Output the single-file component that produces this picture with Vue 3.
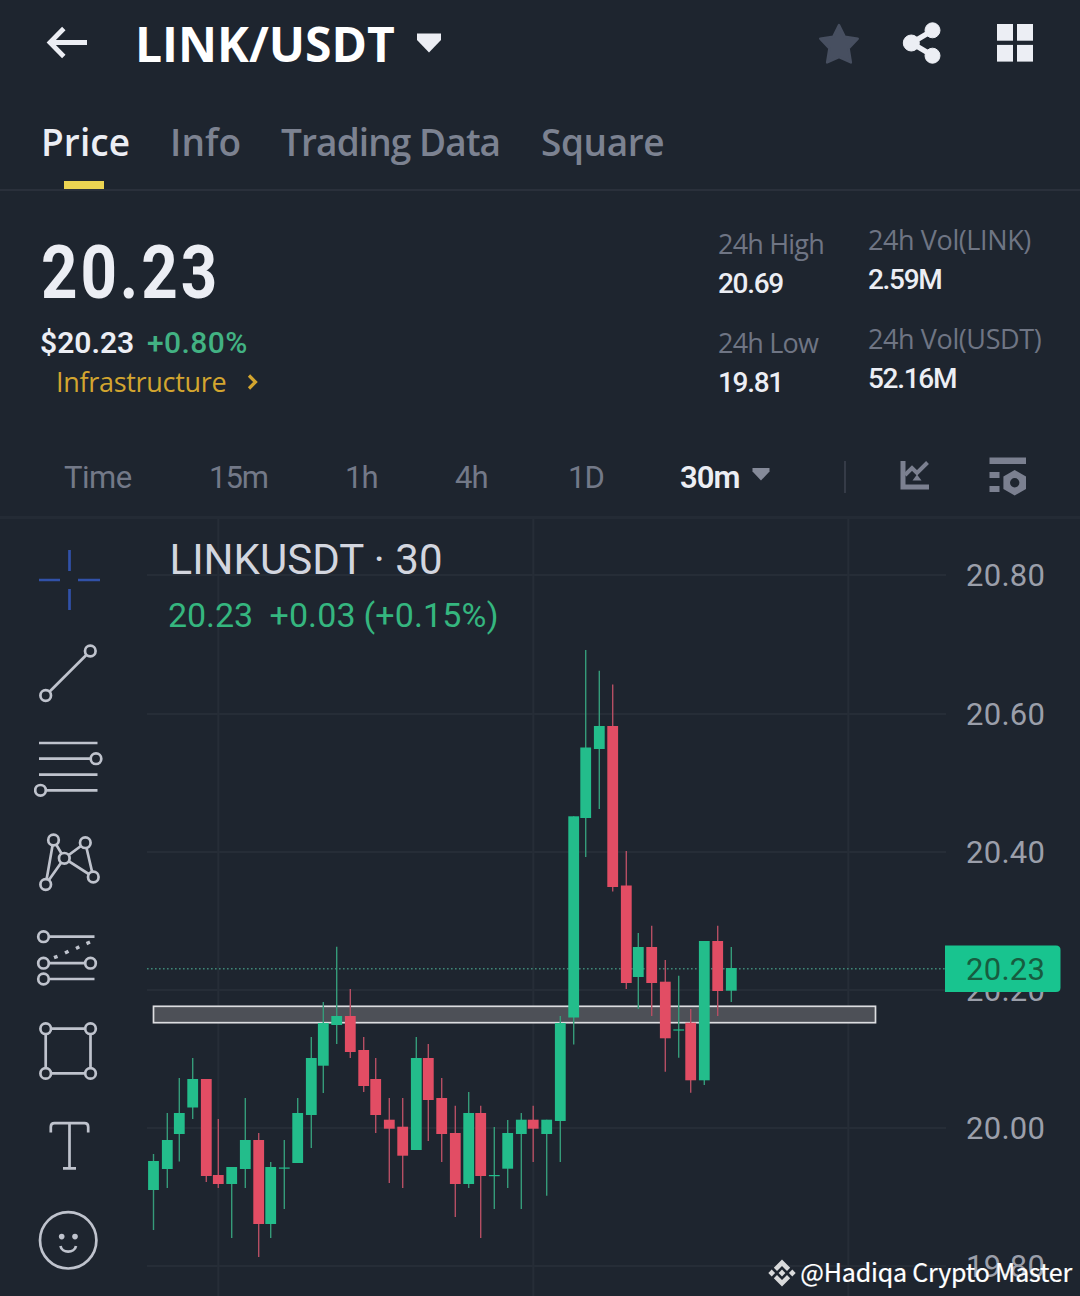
<template>
  <div class="screen">
    <header class="topbar">
      <svg class="back" width="42" height="40" viewBox="0 0 42 40" fill="none" stroke="#eceef4" stroke-width="4.8">
        <path d="M41 19.5H5M17.8 5.5L4 19.5L17.8 33.5" />
      </svg>
      <h1 class="pair">LINK/USDT</h1>
      <svg class="pair-caret" width="26" height="20" viewBox="0 0 26 20" fill="#eceef4">
        <path d="M1 0.5H25V7L13 19.5L1 7Z" />
      </svg>
      <svg class="star" width="42" height="42" viewBox="0 0 42 42" fill="#474f60" stroke="#474f60" stroke-linejoin="round">
        <path d="M21 2L26.8 13.8L39.8 15.6L30.6 25.3L32.9 39.5L21 34.2L9.1 39.5L11.4 25.3L2.2 15.6L15.2 13.8Z" stroke-width="2.4" />
      </svg>
      <svg class="share" width="40" height="42" viewBox="0 0 40 42" fill="#eceef4" stroke="#eceef4">
        <path d="M30.5 8.5L9.5 21L30.5 33.5" fill="none" stroke-width="5.4" />
        <circle cx="30.5" cy="8.3" r="7.5" />
        <circle cx="9.3" cy="21" r="8" />
        <circle cx="30.5" cy="33.7" r="7.5" />
      </svg>
      <svg class="apps" width="36" height="38" viewBox="0 0 36 38" fill="#eceef4">
        <rect width="16" height="16.7" />
        <rect x="20" width="16" height="16.7" />
        <rect y="20.9" width="16" height="16.7" />
        <rect x="20" y="20.9" width="16" height="16.7" />
      </svg>
    </header>

    <nav class="tabs">
      <span v-for="tab in tabs" :key="tab" class="tab" :class="{ active: tab === 'Price', long: tab.length > 8 }">{{ tab }}</span>
    </nav>

    <section class="summary">
      <div class="quote">
        <div class="last-price">20.23</div>
        <div class="fiat"><span class="usd">$20.23</span><span class="change">+0.80%</span></div>
        <div class="sector">
          <span>Infrastructure</span>
          <svg width="12" height="16" viewBox="0 0 12 16" fill="none" stroke="#d3a52f" stroke-width="3.2">
            <path d="M2 1.5L8.5 8L2 14.5" />
          </svg>
        </div>
      </div>
      <div v-for="(column, i) in stats" :key="i" class="stats" :class="`stats-${i}`">
        <div v-for="stat in column" :key="stat.label" class="stat">
          <div class="stat-label">{{ stat.label }}</div>
          <div class="stat-value">{{ stat.value }}</div>
        </div>
      </div>
    </section>

    <nav class="intervals">
      <span v-for="interval in intervals" :key="interval">{{ interval }}</span>
      <span class="selected">30m</span>
      <svg class="interval-caret" width="18" height="13" viewBox="0 0 18 13" fill="#858a99">
        <path d="M0.5 0H17.5V3.5L9 12.5L0.5 3.5Z" />
      </svg>
      <i class="divider"></i>
      <svg class="line-icon" width="30" height="31" viewBox="0 0 30 31" fill="none" stroke="#7b8090">
        <path d="M3 1V27H29" stroke-width="5" />
        <path d="M5 15L12 8L17 13L27.5 2.5" stroke-width="4" />
        <path d="M17 14.5L21.5 20.5H12.5Z" fill="#7b8090" stroke="none" />
      </svg>
      <svg class="settings-icon" width="38" height="39" viewBox="0 0 38 39" fill="#7b8090">
        <rect x="0.5" y="0.5" width="36.5" height="6.5" />
        <rect x="0.5" y="15" width="10" height="6" />
        <rect x="0.5" y="29" width="10" height="6" />
        <path fill-rule="evenodd" d="M25.7 13L37 19.5V32L25.7 38.5L14.4 32V19.5ZM25.7 21A4.7 4.7 0 1 0 25.7 30.4A4.7 4.7 0 1 0 25.7 21Z" />
      </svg>
    </nav>

    <section class="chart">
      <aside class="tools">
        <svg viewBox="-35 -47 70 94.3" class="tool crosshair">
          <path d="M-30 0H-9M9 0H31M0.5 -30V-9M0.5 9V30" />
        </svg>
        <svg viewBox="-35 -47 70 94.3" class="tool">
          <path d="M-23.3 21.5L21.3 -23" />
          <circle cx="-23.3" cy="21.5" r="5.3" />
          <circle cx="21.3" cy="-23" r="5.3" />
        </svg>
        <svg viewBox="-35 -47 70 94.3" class="tool">
          <path d="M-30 -26H28.5M-30 -10.3H27M-30 5.6H28.5M-28.5 21.3H28.5" />
          <circle cx="27" cy="-10.3" r="5.3" />
          <circle cx="-28.5" cy="21.3" r="5.3" />
        </svg>
        <svg viewBox="-35 -47 70 94.3" class="tool">
          <path d="M-23.3 21.5L-15.5 -23L-4.7 -4.7L16.3 -20.3L24.3 14L-4.7 -4.7Z" />
          <circle cx="-15.5" cy="-23" r="5.3" />
          <circle cx="16.3" cy="-20.3" r="5.3" />
          <circle cx="-4.7" cy="-4.7" r="5.3" />
          <circle cx="-23.3" cy="21.5" r="5.3" />
          <circle cx="24.3" cy="14" r="5.3" />
        </svg>
        <svg viewBox="-35 -47 70 94.3" class="tool">
          <path d="M-25.5 -20.3H25.5M-25.5 6.2H21.5M-25.5 22H25.5" />
          <path d="M-15 0.7L-11.5 -0.7M-4 -4L-0.5 -5.8M7 -8.6L10.3 -10.3M17.5 -13.4L21 -15" stroke-width="3.4" />
          <circle cx="-25.5" cy="-20.3" r="5.3" />
          <circle cx="-25.5" cy="6.2" r="5.3" />
          <circle cx="21.5" cy="6.2" r="5.3" />
          <circle cx="-25.5" cy="22" r="5.3" />
        </svg>
        <svg viewBox="-35 -47 70 94.3" class="tool">
          <path d="M-23.3 -22.3H21.5V22.4H-23.3Z" />
          <circle cx="-23.3" cy="-22.3" r="5.3" />
          <circle cx="21.5" cy="-22.3" r="5.3" />
          <circle cx="-23.3" cy="22.4" r="5.3" />
          <circle cx="21.5" cy="22.4" r="5.3" />
        </svg>
        <svg viewBox="-35 -47 70 94.3" class="tool">
          <path d="M-18.2 -13.5V-19Q-18.2 -22.8 -14.5 -22.8H15.5Q19.2 -22.8 19.2 -19V-13.5M0.5 -22.8V22.5M-6 22.3H7" />
        </svg>
        <svg viewBox="-35 -47 70 94.3" class="tool">
          <circle cx="-0.8" cy="0.3" r="28.2" />
          <path d="M-8.5 6C-7.2 13.5 5.5 13.5 7 6" />
          <circle class="eye" cx="-7.3" cy="-3.4" r="2.8" />
          <circle class="eye" cx="6" cy="-3.4" r="2.8" />
        </svg>
      </aside>

      <svg class="plot" width="934" height="777" viewBox="146 519 934 777">
        <g class="grid">
          <line v-for="tick in ticks" :key="tick.label" x1="147" x2="946" :y1="tick.y" :y2="tick.y" />
          <line v-for="x in [218.3, 533.3, 848.3]" :key="x" :x1="x" :x2="x" y1="519" y2="1296" />
        </g>

        <text class="symbol" x="169.5" y="573.5" textLength="273">LINKUSDT · 30</text>
        <text class="legend" x="168" y="627.3" textLength="85">20.23</text>
        <text class="legend" x="269.5" y="627.3" textLength="86">+0.03</text>
        <text class="legend" x="363.5" y="627.3" textLength="135">(+0.15%)</text>

        <line class="price-line" x1="147" x2="945" y1="968.7" y2="968.7" />
        <rect class="zone" x="153.5" y="1006.3" width="722" height="16.4" />

        <g v-for="[x, high, top, bottom, low, up] in candles" :key="x" :class="up ? 'up' : 'down'">
          <line class="wick" :x1="x" :x2="x" :y1="high" :y2="low" />
          <rect :x="x - 5.4" :y="top" width="10.8" :height="bottom - top" />
        </g>

        <text v-for="tick in ticks" :key="tick.label" class="tick" x="966" :y="tick.y + 10.5" textLength="79">{{ tick.label }}</text>

        <path class="badge" d="M945 945.5H1056Q1060.5 945.5 1060.5 950V987.5Q1060.5 992 1056 992H945Z" />
        <text class="badge-text" x="966" y="980" textLength="79">20.23</text>
      </svg>

      <div class="watermark">
        <svg width="28" height="28" viewBox="0 0 28 28" fill="#d9dadb">
          <path d="M14 0.5L22.2 8.7L19 11.9L14 6.9L9 11.9L5.8 8.7Z" />
          <path d="M14 27.5L22.2 19.3L19 16.1L14 21.1L9 16.1L5.8 19.3Z" />
          <path d="M3.7 10.6L7.1 14L3.7 17.4L0.3 14Z" />
          <path d="M24.3 10.6L27.7 14L24.3 17.4L20.9 14Z" />
          <path d="M14 10.6L17.4 14L14 17.4L10.6 14Z" />
        </svg>
        <span>@Hadiqa Crypto Master</span>
      </div>
    </section>
  </div>
</template>

<script setup>
const tabs = ['Price', 'Info', 'Trading Data', 'Square'];

const intervals = ['Time', '15m', '1h', '4h', '1D'];

const stats = [
  [
    { label: '24h High', value: '20.69' },
    { label: '24h Low', value: '19.81' }
  ],
  [
    { label: '24h Vol(LINK)', value: '2.59M' },
    { label: '24h Vol(USDT)', value: '52.16M' }
  ]
];

const ticks = [
  { label: '20.80', y: 575 },
  { label: '20.60', y: 714 },
  { label: '20.40', y: 852 },
  { label: '20.20', y: 990 },
  { label: '20.00', y: 1128 },
  { label: '19.80', y: 1266 }
];

// x, high, body top, body bottom, low, rising
const candles = [
  [153.5, 1154, 1161, 1190, 1230, 1],
  [167.3, 1113, 1140, 1169, 1188, 1],
  [179.3, 1078, 1113, 1134, 1161.5, 1],
  [192.7, 1058, 1079, 1107.5, 1119, 1],
  [206.3, 1079, 1079, 1176, 1182, 0],
  [218.3, 1119, 1175, 1184, 1188, 0],
  [231.7, 1167, 1167, 1184, 1238, 1],
  [245.3, 1098, 1140, 1169, 1188, 1],
  [258.7, 1133, 1140, 1224, 1257, 0],
  [270.7, 1162, 1167, 1224, 1238, 1],
  [284.3, 1140, 1167.5, 1168.7, 1209, 1],
  [297.7, 1098, 1113, 1163, 1163, 1],
  [311.3, 1037, 1058, 1115, 1148, 1],
  [323.3, 1002, 1023, 1065.7, 1093, 1],
  [336.7, 946.7, 1016, 1025, 1044, 1],
  [350.3, 989, 1016, 1052, 1058, 0],
  [363.7, 1037, 1050, 1086, 1092, 0],
  [375.7, 1058, 1079, 1115, 1133, 0],
  [389.3, 1098, 1119.7, 1128.7, 1183, 0],
  [402.7, 1098, 1126.7, 1155.7, 1188, 0],
  [416.3, 1037, 1058, 1150, 1150, 1],
  [428.3, 1044, 1058, 1100, 1141, 0],
  [441.7, 1078, 1098, 1134, 1162, 0],
  [455.3, 1105.7, 1133, 1184, 1217, 0],
  [468.7, 1092, 1113, 1184, 1188, 1],
  [480.7, 1105.7, 1113, 1176, 1238, 0],
  [494.3, 1127, 1175, 1176.2, 1209, 1],
  [507.7, 1120, 1133, 1168.7, 1188, 1],
  [521.3, 1113, 1119.7, 1134, 1209, 1],
  [533.2, 1105.7, 1119.7, 1128.7, 1162, 0],
  [546.7, 1119.7, 1119.7, 1134, 1195.7, 1],
  [560.3, 1016, 1023, 1121, 1162, 1],
  [573.7, 816.3, 816.3, 1017.5, 1044.5, 1],
  [585.7, 650, 747.5, 818, 857, 1],
  [599.3, 670.7, 726, 749, 809, 1],
  [612.7, 684.5, 726, 887, 891.5, 0],
  [626.3, 851, 885.5, 983, 989, 0],
  [638.3, 933, 947, 977, 1009, 1],
  [651.7, 925.7, 947, 983, 1016, 0],
  [665.3, 960, 981.7, 1038.3, 1071.7, 0],
  [678.7, 975.7, 1029.4, 1030.6, 1057.7, 1],
  [690.7, 1009, 1022.7, 1080.3, 1092.7, 0],
  [704.3, 941, 941, 1080.3, 1085, 1],
  [717.7, 925.7, 941, 991, 1016, 0],
  [731.3, 947, 968, 990.7, 1002, 1]
];
</script>

<style>
body {
  background: #1e252f;
}
</style>

<style scoped>
.screen {
  width: 1080px;
  height: 1296px;
  overflow: hidden;
  background: #1e252f;
  color: #eceef4;
  font-family: "Open Sans", "Noto Sans", sans-serif;
}

.topbar {
  display: flex;
  align-items: center;
  box-sizing: border-box;
  height: 88px;
  padding: 0 46px;
}

.back {
  margin-top: -3px;
}

.pair {
  width: 281px;
  margin: 0 0 0 47px;
  color: #fff;
  font-size: 48px;
  font-weight: 700;
  line-height: 88px;
  white-space: nowrap;
}

.pair-caret {
  margin-top: -3px;
}

.star {
  margin-left: 376px;
}

.share {
  margin: -3px 0 0 42px;
}

.apps {
  margin: -3px 0 0 55px;
}

.tabs {
  display: grid;
  grid-template-columns: 129px 111px 260px 1fr;
  box-sizing: border-box;
  height: 103px;
  padding-left: 41px;
  border-bottom: 2px solid #2a303b;
}

.tab {
  position: relative;
  height: 101px;
  color: #7c8291;
  font-size: 37px;
  font-weight: 600;
  line-height: 108px;
  letter-spacing: 0.1px;
  white-space: nowrap;
}

.tab:last-child {
  letter-spacing: -0.4px;
}

.tab.active {
  color: #eceef4;
}

.tab.long {
  letter-spacing: -0.9px;
}

.tab.active::after {
  content: "";
  position: absolute;
  left: 23px;
  bottom: 0;
  width: 40px;
  height: 8px;
  background: #ecd452;
}

.summary {
  display: grid;
  grid-template-columns: 677px 150px 1fr;
  height: 249px;
  padding-left: 41px;
}

.quote {
  padding-top: 43px;
  font-family: Roboto, sans-serif;
}

.last-price {
  font-size: 74px;
  font-weight: 700;
  line-height: 78px;
  letter-spacing: 3.4px;
  transform: scaleX(0.86);
  transform-origin: left;
}

.fiat {
  display: grid;
  grid-template-columns: 107px 1fr;
  margin-left: -1px;
  font-size: 30px;
  font-weight: 600;
  line-height: 62px;
}

.change {
  color: #42b283;
  font-weight: 500;
  letter-spacing: 0.4px;
}

.sector {
  display: flex;
  align-items: center;
  margin-top: -12px;
  padding-left: 15px;
  color: #d3a52f;
  font-family: "Open Sans", sans-serif;
  font-size: 27px;
  line-height: 40px;
  letter-spacing: -0.3px;
}

.sector span {
  width: 191px;
}

.stats {
  padding-top: 33px;
}

.stats-1 {
  padding-top: 29px;
}

.stat {
  height: 99px;
  line-height: 40px;
  white-space: nowrap;
}

.stat-label {
  color: #6f7584;
  font-size: 27px;
  letter-spacing: -0.8px;
}

.stats-1 .stat-label {
  letter-spacing: -0.4px;
}

.stat-value {
  font-family: Roboto, sans-serif;
  font-size: 28px;
  font-weight: 500;
  letter-spacing: -1.3px;
}

.intervals {
  display: grid;
  grid-template-columns: 145px 136px 110px 113px 112px 72px 92px 56px 89px 1fr;
  align-items: center;
  box-sizing: border-box;
  height: 79px;
  padding: 0 0 2px 64px;
  border-bottom: 3px solid #242b35;
  color: #737988;
  font-family: Roboto, sans-serif;
  font-size: 31px;
  letter-spacing: -1px;
}

.intervals span:first-child {
  letter-spacing: -0.5px;
}

.selected {
  color: #eceef4;
  font-weight: 600;
}

.interval-caret {
  margin-top: -6px;
}

.divider {
  width: 2px;
  height: 32px;
  background: #353b47;
}

.line-icon {
  margin-top: -4px;
}

.settings-icon {
  margin-top: -2px;
}

.chart {
  position: relative;
  display: grid;
  grid-template-columns: 146px 934px;
}

.tools {
  display: flex;
  flex-direction: column;
  padding: 14px 0 0 34px;
  height: 763px;
}

.tool {
  flex: none;
  width: 70px;
  height: 94.3px;
  fill: #1e252f;
  stroke: #bfc3cd;
  stroke-width: 2.7;
}

.crosshair {
  stroke: #3151a8;
}

.eye {
  fill: #bfc3cd;
  stroke: none;
}

.plot {
  display: block;
  font-family: Roboto, sans-serif;
}

.grid line {
  stroke: #262d37;
  stroke-width: 2;
}

.symbol {
  fill: #d3d6df;
  font-size: 42px;
}

.legend {
  fill: #35b67f;
  font-size: 34px;
}

.price-line {
  stroke: #3c8777;
  stroke-width: 1.4;
  stroke-dasharray: 1.6 2.4;
}

.zone {
  fill: #4d5057;
  stroke: #dcdde0;
  stroke-width: 1.7;
}

.wick {
  stroke-width: 1.4;
}

.up {
  fill: #23bd8b;
}

.up .wick {
  stroke: #359b79;
}

.down {
  fill: #e24d64;
}

.down .wick {
  stroke: #b54e63;
}

.tick {
  fill: #9b9faa;
  font-size: 31px;
}

.badge {
  fill: #18c48f;
}

.badge-text {
  fill: #175c40;
  font-size: 31px;
}

.watermark {
  position: absolute;
  right: 8px;
  bottom: 5px;
  display: flex;
  align-items: center;
  gap: 4px;
  color: #fff;
  font-family: "Noto Sans CJK SC", sans-serif;
  font-size: 25px;
  font-weight: 400;
  line-height: 40px;
  letter-spacing: -0.2px;
  white-space: nowrap;
  -webkit-text-stroke: 0.2px #fff;
}

.watermark span {
  margin-top: -3px;
}
</style>
